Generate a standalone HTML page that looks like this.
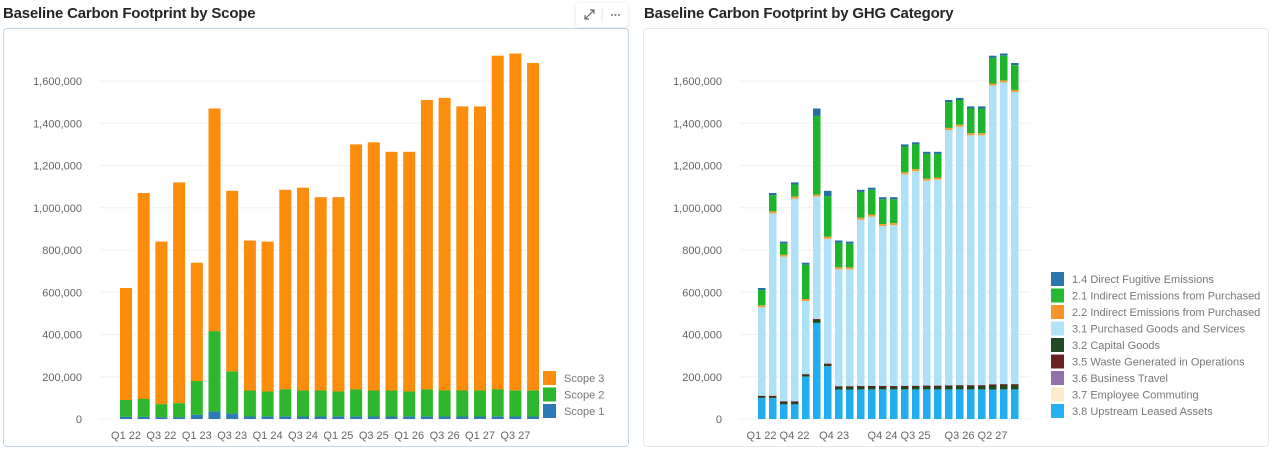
<!DOCTYPE html>
<html><head><meta charset="utf-8"><style>
html,body{margin:0;padding:0;background:#fff;width:1280px;height:451px;overflow:hidden;font-family:"Liberation Sans",sans-serif}
.t{position:absolute;top:5px;font-size:15px;font-weight:bold;color:#252525;letter-spacing:-0.2px}
.p{position:absolute;top:28px;height:419px;border:1px solid #cfdbe6;border-radius:4px;box-sizing:border-box}
.ic{position:absolute;left:576px;top:3px;width:52px;height:24px;background:#fff;border-radius:4px;box-shadow:0 1px 4px rgba(0,0,0,.12)}
svg{position:absolute;left:0;top:0}
</style></head><body>
<div class="t" style="left:3px">Baseline Carbon Footprint by Scope</div>
<div class="t" style="left:644px">Baseline Carbon Footprint by GHG Category</div>
<div class="p" style="left:3px;width:626px;border-color:#c5d5e4"></div>
<div class="p" style="left:643px;width:626px;border-color:#e3e8ee"></div>
<div class="ic"><svg width="52" height="24" viewBox="0 0 52 24"><g stroke="#666" stroke-width="1.2" fill="none"><path d="M9 16 L18 7 M14 7 H18 V11 M9 12 V16 H13"/></g><line x1="26" y1="5" x2="26" y2="19" stroke="#e5e5e5"/><g fill="#777"><circle cx="36" cy="12" r="1"/><circle cx="39.5" cy="12" r="1"/><circle cx="43" cy="12" r="1"/></g></svg></div>
<svg id="s" width="1280" height="451" viewBox="0 0 1280 451"></svg>
<script>
var o='';
function R(x,y,w,h,c){o+='<rect x="'+x.toFixed(1)+'" y="'+y.toFixed(1)+'" width="'+w+'" height="'+Math.max(h,0).toFixed(1)+'" fill="'+c+'"/>';}
function T(x,y,s,a,c,fs){o+='<text x="'+x+'" y="'+y+'" text-anchor="'+a+'" fill="'+(c||'#666')+'" font-size="'+(fs||11)+'">'+s+'</text>';}
var k=42.25/200;
var labs=['0','200,000','400,000','600,000','800,000','1,000,000','1,200,000','1,400,000','1,600,000'];
for(var i=0;i<9;i++){var y=419-i*42.25;
 o+='<line x1="100" x2="527" y1="'+y+'" y2="'+y+'" stroke="#f0f0f0"/>';T(82,y+4,labs[i],'end');
 o+='<line x1="740" x2="1030" y1="'+y+'" y2="'+y+'" stroke="#f0f0f0"/>';T(722,y+4,labs[i],'end');}
var tot=[620,1070,840,1120,740,1470,1080,845,840,1085,1095,1050,1050,1300,1310,1265,1265,1510,1520,1480,1480,1720,1730,1685];
var s2=[90,95,70,75,180,415,225,135,130,140,135,135,130,140,135,135,130,140,135,135,135,140,135,135];
var s1=[10,10,8,8,20,35,25,12,12,12,12,12,12,12,12,12,12,12,12,12,12,12,12,12];
for(var i=0;i<24;i++){var x=120+17.7*i;
 R(x,419-tot[i]*k,12,(tot[i]-s2[i])*k,'#fb8c0c');
 R(x,419-s2[i]*k,12,(s2[i]-s1[i])*k,'#2db72d');
 R(x,419-s1[i]*k,12,s1[i]*k,'#2d7bb6');}
var xl=['Q1 22','Q3 22','Q1 23','Q3 23','Q1 24','Q3 24','Q1 25','Q3 25','Q1 26','Q3 26','Q1 27','Q3 27'];
for(var j=0;j<12;j++)T((126+35.4*j).toFixed(1),439,xl[j],'middle');
[['Scope 3','#fb8c0c'],['Scope 2','#2db72d'],['Scope 1','#2d7bb6']].forEach(function(l,j){R(543,371+j*16.5,13,14,l[1]);T(564,382+j*16.5,l[0],'start','#777');});
// right
var up=[100,100,70,70,200,455,250,140,140,140,140,140,140,140,140,140,140,140,140,140,140,140,140,140];
var cap=[10,10,14,14,12,18,12,15,15,16,16,16,16,17,17,18,18,19,20,20,20,24,25,25];
for(var i=0;i<24;i++){var x=758+11*i,w=7.5;
 var b=s1[i]>20?s1[i]:10, g=s2[i]-b-8, or=10;
 var lt=tot[i]-b-g-or-cap[i]-up[i];
 var y0=up[i];R(x,419-y0*k,w,y0*k,'#22adf0');
 R(x,419-(y0+cap[i])*k,w,cap[i]*k,'#1f4a1f');R(x,419-(y0+cap[i])*k,w,1.2,'#6b1a1a');y0+=cap[i];
 R(x,419-(y0+lt)*k,w,lt*k,'#aee0f7');y0+=lt;
 R(x,419-(y0+or)*k,w,or*k,'#f4a13a');y0+=or;
 R(x,419-(y0+g)*k,w,g*k,'#1db52b');y0+=g;
 R(x,419-(y0+b)*k,w,b*k,'#236f9f');}
[['Q1 22',0],['Q4 22',3],['Q4 23',6.6],['Q4 24',11],['Q3 25',14],['Q3 26',18],['Q2 27',21]].forEach(function(l){T((761.5+11*l[1]).toFixed(1),439,l[0],'middle');});
var rl=[['1.4 Direct Fugitive Emissions','#2a77b0'],['2.1 Indirect Emissions from Purchased Electricity','#22bb33'],['2.2 Indirect Emissions from Purchased Heat','#f99426'],['3.1 Purchased Goods and Services','#b3e3f8'],['3.2 Capital Goods','#1f4a24'],['3.5 Waste Generated in Operations','#6b2020'],['3.6 Business Travel','#9270ab'],['3.7 Employee Commuting','#fde9cc'],['3.8 Upstream Leased Assets','#26b0f4']];
o+='<clipPath id="c"><rect x="1040" y="260" width="222" height="170"/></clipPath><g clip-path="url(#c)">';
rl.forEach(function(l,j){R(1051,272+j*16.5,13,14,l[1]);T(1072,283+j*16.5,l[0],'start','#777');});
o+='</g>';
document.getElementById('s').innerHTML=o;
</script>
</body></html>
